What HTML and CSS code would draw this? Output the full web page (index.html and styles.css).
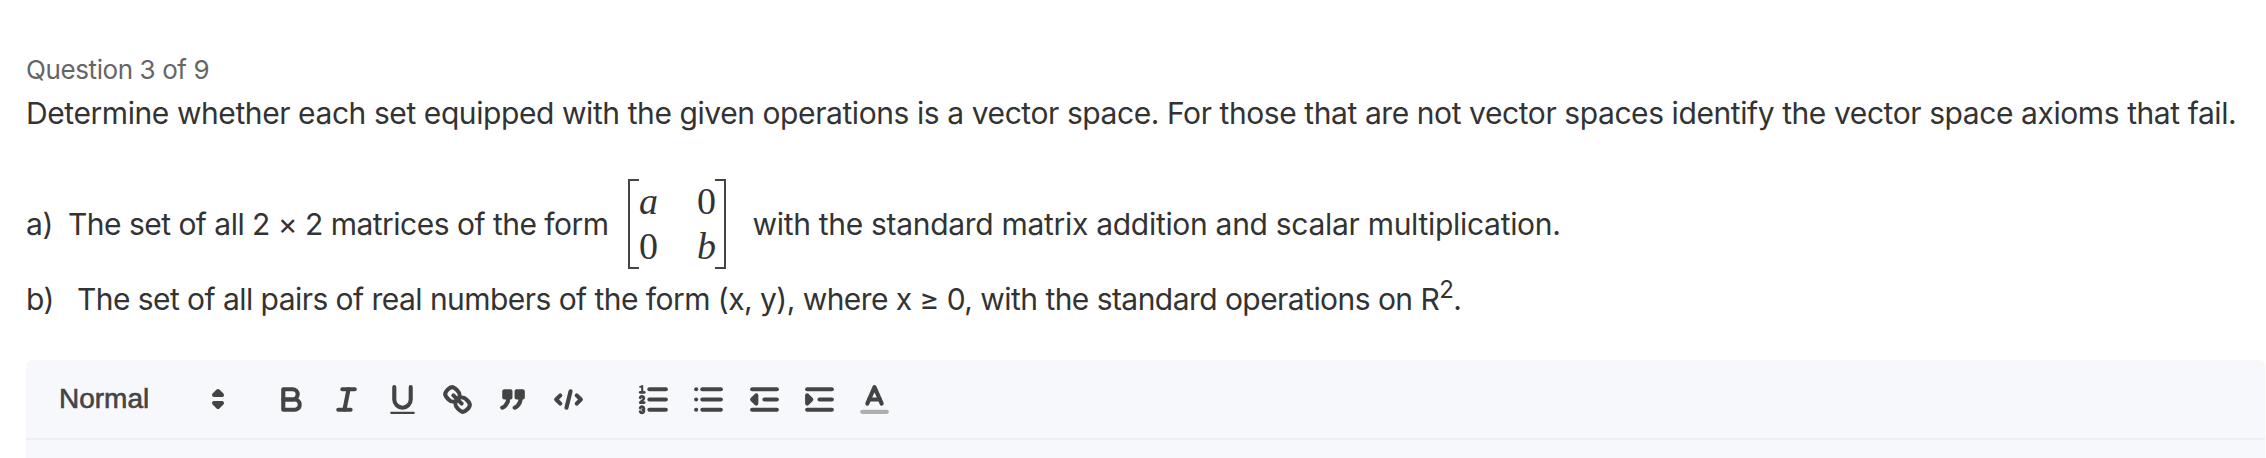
FILE: index.html
```html
<!DOCTYPE html>
<html lang="en">
<head>
    <meta charset="UTF-8">
    <title>Question 3 of 9</title>
    <link rel="stylesheet" href="styles.css">
</head>
<body>
    <div class="question">
        <div class="counter">Question 3 of 9</div>
        <p class="prompt">Determine whether each set equipped with the given operations is a vector space. For those that are not vector spaces identify the vector space axioms that fail.</p>
        <div class="part part-a">
            <span class="part-label">a)</span>
            <span class="part-lead">The set of all 2 × 2 matrices of the form</span>
            <span class="matrix">
                <i>a</i><span>0</span>
                <span>0</span><i>b</i>
            </span>
            <span class="part-rest">with the standard matrix addition and scalar multiplication.</span>
        </div>
        <div class="part part-b">
            <span class="part-label">b)</span>
            <span>The set of all pairs of real numbers of the form (x, y), where x ≥ 0, with the standard operations on R<sup>2</sup>.</span>
        </div>
    </div>
    <div class="editor">
        <div class="toolbar">
            <div class="picker">
                <span>Normal</span>
                <svg viewBox="0 0 18 18"><polygon class="fill" points="7 11 9 13 11 11 7 11"/><polygon class="fill" points="7 7 9 5 11 7 7 7"/></svg>
            </div>
            <div class="group">
                <button><svg viewBox="0 0 18 18"><path d="M5,4H9.5A2.5,2.5,0,0,1,12,6.5v0A2.5,2.5,0,0,1,9.5,9H5V4Z"/><path d="M5,9h5.5A2.5,2.5,0,0,1,13,11.5v0A2.5,2.5,0,0,1,10.5,14H5V9Z"/></svg></button>
                <button><svg viewBox="0 0 18 18"><line x1="7" x2="13" y1="4" y2="4"/><line x1="5" x2="11" y1="14" y2="14"/><line x1="8" x2="10" y1="14" y2="4"/></svg></button>
                <button><svg viewBox="0 0 18 18"><path d="M5,3V9a4.012,4.012,0,0,0,4,4H9a4.012,4.012,0,0,0,4-4V3"/><rect class="solid" height="1" rx=".5" ry=".5" width="12" x="3" y="15"/></svg></button>
                <button><svg viewBox="0 0 18 18"><line x1="7" x2="11" y1="7" y2="11"/><path d="M8.9,4.577a3.476,3.476,0,0,1,.36,4.679A3.476,3.476,0,0,1,4.577,8.9C3.185,7.5,2.035,6.4,4.217,4.217S7.5,3.185,8.9,4.577Z"/><path d="M13.423,9.1a3.476,3.476,0,0,0-4.679-.36,3.476,3.476,0,0,0,.36,4.679c1.392,1.392,2.5,2.542,4.679.36S14.815,10.5,13.423,9.1Z"/></svg></button>
                <button><svg viewBox="0 0 18 18"><rect class="filled" height="3" width="3" x="5" y="5"/><rect class="filled" height="3" width="3" x="11" y="5"/><path d="M7,8c0,4.031-3,5-3,5"/><path d="M13,8c0,4.031-3,5-3,5"/></svg></button>
                <button><svg viewBox="0 0 18 18"><polyline points="5 7 3 9 5 11"/><polyline points="13 7 15 9 13 11"/><line x1="10" x2="8" y1="5" y2="13"/></svg></button>
            </div>
            <div class="group">
                <button><svg viewBox="0 0 18 18"><line x1="7" x2="15" y1="4" y2="4"/><line x1="7" x2="15" y1="9" y2="9"/><line x1="7" x2="15" y1="14" y2="14"/><line class="thin" x1="2.5" x2="4.5" y1="5.5" y2="5.5"/><path class="solid" d="M3.5,6A0.5,0.5,0,0,1,3,5.5V3.085l-0.276.138A0.5,0.5,0,0,1,2.053,3c-0.124-.247-0.023-0.324.224-0.447l1-.5A0.5,0.5,0,0,1,4,2.5v3A0.5,0.5,0,0,1,3.5,6Z"/><path class="thin" d="M4.5,10.5h-2c0-.234,1.85-1.076,1.85-2.234A0.959,0.959,0,0,0,2.5,8.156"/><path class="thin" d="M2.5,14.846a0.959,0.959,0,0,0,1.85-.109A0.7,0.7,0,0,0,3.75,14a0.688,0.688,0,0,0,.6-0.736,0.959,0.959,0,0,0-1.85-.109"/></svg></button>
                <button><svg viewBox="0 0 18 18"><line x1="6" x2="15" y1="4" y2="4"/><line x1="6" x2="15" y1="9" y2="9"/><line x1="6" x2="15" y1="14" y2="14"/><line x1="3" x2="3" y1="4" y2="4"/><line x1="3" x2="3" y1="9" y2="9"/><line x1="3" x2="3" y1="14" y2="14"/></svg></button>
                <button><svg viewBox="0 0 18 18"><line x1="3" x2="15" y1="14" y2="14"/><line x1="3" x2="15" y1="4" y2="4"/><line x1="9" x2="15" y1="9" y2="9"/><polyline class="filled" points="5 7 5 11 3 9 5 7"/></svg></button>
                <button><svg viewBox="0 0 18 18"><line x1="3" x2="15" y1="14" y2="14"/><line x1="3" x2="15" y1="4" y2="4"/><line x1="9" x2="15" y1="9" y2="9"/><polyline class="filled" points="3 7 3 11 5 9 3 7"/></svg></button>
                <button><svg viewBox="0 0 18 18"><line class="label" x1="3" x2="15" y1="15" y2="15"/><polyline points="5.5 11 9 3 12.5 11"/><line x1="11.63" x2="6.38" y1="9" y2="9"/></svg></button>
            </div>
        </div>
    </div>
</body>
</html>
```

FILE: styles.css
```css
body {
    margin: 0;
    height: 458px;
    overflow: hidden;
    background-color: #fff;
    font-family: Inter, "Liberation Sans", sans-serif;
    color: #333;
}

.question {
    padding: 52px 0 0 26px;
    font-size: 30px;
    letter-spacing: -0.42px;
}

.counter {
    color: #666;
    font-size: 26px;
    letter-spacing: -0.4px;
    line-height: 36px;
}

.prompt {
    margin: 5px 0 0;
    line-height: 40px;
    white-space: nowrap;
}

.part {
    display: flex;
    align-items: center;
    white-space: nowrap;
}

.part-a {
    margin-top: 46px;
    gap: 15px;
}

.part-lead {
    letter-spacing: -0.52px;
}

.part-rest {
    letter-spacing: -0.3px;
}

.part-b {
    margin-top: 10px;
    gap: 23px;
    line-height: 40px;
    letter-spacing: -0.55px;
}

sup {
    font-size: 24px;
    line-height: 0;
    vertical-align: 12px;
}

/* Matrix */
.matrix {
    display: inline-grid;
    grid-template-columns: 36px 36px;
    grid-auto-rows: 45px;
    column-gap: 22px;
    align-items: center;
    justify-items: center;
    justify-content: center;
    position: relative;
    width: 98px;
    height: 90px;
    box-sizing: border-box;
    font-family: "Liberation Serif", serif;
    font-size: 38px;
    letter-spacing: 0;
    line-height: 45px;
    margin: 0 11px 0 5px;
}

.matrix::before,
.matrix::after {
    content: "";
    position: absolute;
    top: 0;
    bottom: 0;
    width: 9px;
    border: 2px solid #444;
}

.matrix::before {
    left: 0;
    border-right: none;
}

.matrix::after {
    right: 0;
    border-left: none;
}

/* Editor toolbar */
.editor {
    margin: 41px 1px 0 26px;
    height: 98px;
    background-color: #f6f8fc;
    border-radius: 6px 6px 0 0;
}

.toolbar {
    display: flex;
    align-items: center;
    height: 80px;
    padding: 0 16px;
    box-sizing: border-box;
    border-bottom: 2px solid #eceef3;
}

.picker {
    display: flex;
    align-items: center;
    justify-content: space-between;
    width: 194px;
    margin-right: 28px;
    padding-left: 17px;
    box-sizing: border-box;
    font-family: "Liberation Sans", sans-serif;
    font-size: 28px;
    font-weight: 500;
    letter-spacing: 0;
    color: #444;
    -webkit-text-stroke: 0.6px #444;
}

.picker svg {
    width: 36px;
    height: 36px;
}

.group {
    display: flex;
    margin-right: 30px;
}

button {
    display: flex;
    align-items: center;
    justify-content: center;
    width: 55.3px;
    height: 48px;
    padding: 0;
    border: none;
    background: none;
}

button svg {
    width: 37px;
    height: 37px;
}

svg {
    fill: none;
    stroke: #444;
    stroke-width: 2;
    stroke-linecap: round;
    stroke-linejoin: round;
}

svg .fill {
    fill: #444;
}

svg .solid {
    fill: #444;
    stroke: none;
}

svg .filled {
    fill: #444;
}

svg .thin {
    stroke-width: 1.3;
}

svg .label {
    stroke: #aeaeae;
}
```
